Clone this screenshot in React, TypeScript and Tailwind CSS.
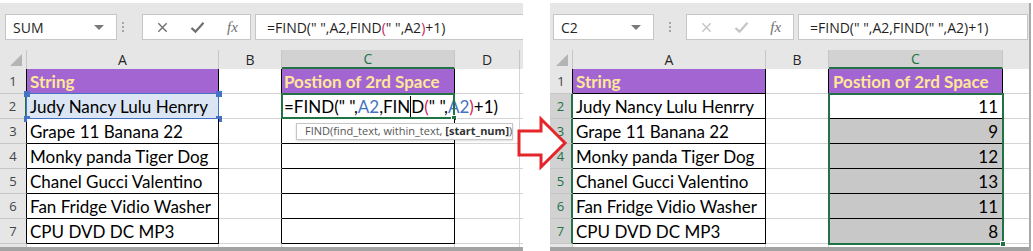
import React from "react";

const STRINGS = [
  "Judy Nancy Lulu Henrry",
  "Grape 11 Banana 22",
  "Monky panda Tiger Dog",
  "Chanel Gucci Valentino",
  "Fan Fridge Vidio Washer",
  "CPU DVD DC MP3",
];
const RESULTS = [11, 9, 12, 13, 11, 8];

const cellFont = "font-['Lato',sans-serif] text-[17px]";
const uiFont = "font-['Open_Sans',sans-serif]";

function XIcon({ className }: { className?: string }) {
  return (
    <svg viewBox="0 0 14 14" className={className}>
      <path d="M2.5 2.5 L11.5 11.5 M11.5 2.5 L2.5 11.5" stroke="currentColor" strokeWidth="1.5" fill="none" />
    </svg>
  );
}

function CheckIcon({ className }: { className?: string }) {
  return (
    <svg viewBox="0 0 16 14" className={className}>
      <path d="M1.5 7.5 L5.8 11.5 L14.5 2" stroke="currentColor" strokeWidth="2.4" fill="none" />
    </svg>
  );
}

function Toolbar({
  name,
  editing,
  nameCls,
  dotsCls,
  btnCls,
  barCls,
  children,
}: {
  name: string;
  editing: boolean;
  nameCls: string;
  dotsCls: string;
  btnCls: string;
  barCls: string;
  children: React.ReactNode;
}) {
  const icon = editing ? "text-[#6f6f6f]" : "text-[#c4c4c4]";
  return (
    <div className={`flex h-[47px] items-start bg-[#e6e6e6] pt-[11px] ${uiFont}`}>
      <div className={`relative flex h-[26px] items-center border border-[#c6c6c6] bg-white pl-[7px] ${nameCls}`}>
        <span className="text-[14px] text-[#262626]">{name}</span>
        <span className="absolute right-[12px] top-[10px] h-0 w-0 border-x-[5px] border-t-[5px] border-x-transparent border-t-[#7a7a7a]" />
      </div>
      <div className={`flex h-[26px] flex-col items-center justify-center gap-[2px] ${dotsCls}`}>
        <span className="h-[2px] w-[2px] bg-[#a6a6a6]" />
        <span className="h-[2px] w-[2px] bg-[#a6a6a6]" />
        <span className="h-[2px] w-[2px] bg-[#a6a6a6]" />
      </div>
      <div className={`flex h-[26px] items-center border border-[#c6c6c6] bg-white pl-[2px] ${btnCls}`}>
        <span className="flex w-[36px] justify-center">
          <XIcon className={`h-[13px] w-[13px] ${icon}`} />
        </span>
        <span className="flex w-[36px] justify-center">
          <CheckIcon className={`h-[13px] w-[15px] ${icon}`} />
        </span>
        <span className="flex w-[36px] justify-center font-['Liberation_Serif',serif] text-[15px] italic text-[#6f6f6f]">
          fx
        </span>
      </div>
      <div className={`flex h-[26px] flex-1 items-center whitespace-nowrap border border-[#c6c6c6] bg-white pl-[11px] text-[14px] text-[#1f1f1f] ${barCls}`}>
        {children}
      </div>
    </div>
  );
}

function Corner({ w }: { w: string }) {
  return (
    <div className={`relative h-full border-r border-[#c6c6c6] ${w}`}>
      <span className="absolute bottom-[3px] right-[4px] h-0 w-0 border-b-[12px] border-l-[12px] border-b-[#b4b4b4] border-l-transparent" />
    </div>
  );
}

function ColHead({ w, label, active }: { w: string; label: string; active?: boolean }) {
  return (
    <div
      className={`flex h-full items-center justify-center border-r border-[#c6c6c6] text-[14px] ${w} ${
        active ? "border-b-2 border-b-[#217346] bg-[#d2d2d2] text-[#217346]" : "text-[#262626]"
      }`}
    >
      {label}
    </div>
  );
}

function RowHead({ w, n, active, sel }: { w: string; n: number; active?: boolean; sel?: boolean }) {
  return (
    <div
      className={`flex h-full items-center justify-center border-b border-[#c6c6c6] pt-[2px] text-[13px] ${uiFont} ${w} ${
        active ? "border-r-2 border-r-[#217346]" : "border-r border-r-black"
      } ${sel ? "bg-[#d2d2d2] text-[#217346]" : "bg-[#e6e6e6] text-[#444]"}`}
    >
      {n}
    </div>
  );
}

const red = "text-[#d0205a]";
const blue = "text-[#4472c4]";

function LeftPane() {
  return (
    <div className="relative flex w-[523px] flex-col">
      <Toolbar
        name="SUM"
        editing
        nameCls="ml-[5px] w-[112px]"
        dotsCls="ml-[4px] w-[4px] mr-[17px]"
        btnCls="w-[109px]"
        barCls="ml-[4px] border-r-0"
      >
        =FIND(" ",A2,FIND<span className={red}>(</span>" ",A2<span className={red}>)</span>+1)
      </Toolbar>

      <div className={`flex h-[19px] bg-[#e6e6e6] ${uiFont}`}>
        <Corner w="w-[27px]" />
        <ColHead w="w-[192px]" label="A" />
        <ColHead w="w-[63px]" label="B" />
        <ColHead w="w-[173px]" label="C" active />
        <ColHead w="w-[65px]" label="D" />
        <div className="flex-1" />
      </div>

      <div className={`flex flex-col ${cellFont}`}>
        {[1, 2, 3, 4, 5, 6, 7].map((r) => (
          <div key={r} className="flex h-[25px]">
            <RowHead w="w-[27px]" n={r} active={r === 2} />
            <div
              className={`relative flex w-[192px] items-center whitespace-nowrap border-b border-r border-black px-[3px] pt-[1px] ${
                r === 1 ? "bg-[#a365d1] font-bold text-[#ffe79a]" : r === 2 ? "bg-[#dbe5f3]" : "bg-white text-black"
              }`}
            >
              {r === 1 ? "String" : STRINGS[r - 2]}
              {r === 2 && (
                <span className="pointer-events-none absolute -inset-[1px] border-[1.5px] border-[#4472c4]">
                  <span className="absolute -left-[3.5px] -top-[3.5px] h-[6px] w-[6px] bg-[#4472c4]" />
                  <span className="absolute -right-[3.5px] -top-[3.5px] h-[6px] w-[6px] bg-[#4472c4]" />
                  <span className="absolute -bottom-[3.5px] -left-[3.5px] h-[6px] w-[6px] bg-[#4472c4]" />
                  <span className="absolute -bottom-[3.5px] -right-[3.5px] h-[6px] w-[6px] bg-[#4472c4]" />
                </span>
              )}
            </div>
            <div className="w-[63px] border-b border-r border-b-[#d4d4d4] border-r-black bg-white" />
            <div
              className={`relative z-10 flex w-[173px] items-center whitespace-nowrap border-b border-r border-black px-[2px] pt-[1px] ${
                r === 1 ? "bg-[#a365d1] font-bold text-[#ffe79a]" : "bg-white text-black"
              }`}
            >
              {r === 1 && "Postion of 2rd Space"}
              {r === 2 && (
                <>
                  <span>
                    =FIND(" ",<span className={blue}>A2</span>,FIN
                  </span>
                  <span className="inline-block h-[21px] w-[1px] shrink-0 bg-black" />
                  <span>
                    D<span className={red}>(</span>" ",<span className={blue}>A2</span>
                    <span className={red}>)</span>+1)
                  </span>
                  <span className="pointer-events-none absolute -inset-[1px] border-2 border-[#217346]">
                    <span className="absolute -bottom-[4px] -right-[4px] h-[6px] w-[6px] border border-white bg-[#217346]" />
                  </span>
                </>
              )}
            </div>
            <div className={`w-[65px] border-b border-r border-[#d4d4d4] ${r === 2 ? "" : "bg-white"}`} />
            <div className="flex-1 border-b border-[#d4d4d4] bg-white" />
          </div>
        ))}
        <div className="flex h-[3px]">
          <div className="w-[27px] border-r border-[#c6c6c6] bg-[#e6e6e6]" />
          <div className="w-[192px] border-r border-[#d4d4d4]" />
          <div className="w-[63px] border-r border-[#d4d4d4]" />
          <div className="w-[173px] border-r border-[#d4d4d4]" />
          <div className="w-[65px] border-r border-[#d4d4d4]" />
        </div>
      </div>
      <div className="h-[4px] bg-[#a3a3a3]" />

      <div className={`absolute left-[296px] top-[120px] z-20 flex h-[17px] w-[217px] items-center whitespace-nowrap border border-[#c6c6c6] bg-white pl-[8px] text-[11px] text-[#555] shadow-[0_1px_2px_rgba(0,0,0,0.15)] ${uiFont}`}>
        FIND(find_text, within_text,&nbsp;<b className="font-bold text-[#333]">[start_num]</b>)
      </div>
    </div>
  );
}

function RightPane() {
  return (
    <div className="relative ml-[27px] flex w-[481px] flex-col border-r-2 border-[#a8a8a8]">
      <Toolbar
        name="C2"
        editing={false}
        nameCls="ml-[3px] w-[101px]"
        dotsCls="ml-[14px] w-[4px] mr-[14px]"
        btnCls="w-[108px]"
        barCls="ml-[4px] mr-[1px]"
      >
        =FIND(" ",A2,FIND(" ",A2)+1)
      </Toolbar>

      <div className={`flex h-[19px] bg-[#e6e6e6] ${uiFont}`}>
        <Corner w="w-[23px]" />
        <ColHead w="w-[193px]" label="A" />
        <ColHead w="w-[63px]" label="B" />
        <ColHead w="w-[174px]" label="C" active />
        <div className="flex-1" />
      </div>

      <div className={`relative flex flex-col ${cellFont}`}>
        {[1, 2, 3, 4, 5, 6, 7].map((r) => (
          <div key={r} className="flex h-[25px]">
            <RowHead w="w-[23px]" n={r} active={r > 1} sel={r > 1} />
            <div
              className={`flex w-[193px] items-center whitespace-nowrap border-b border-r border-black px-[3px] pt-[1px] ${
                r === 1 ? "bg-[#a365d1] font-bold text-[#ffe79a]" : "bg-white text-black"
              }`}
            >
              {r === 1 ? "String" : STRINGS[r - 2]}
            </div>
            <div className="w-[63px] border-b border-r border-b-[#d4d4d4] border-r-black bg-white" />
            <div
              className={`flex w-[174px] items-center whitespace-nowrap border-b border-r border-black px-[4px] pt-[1px] ${
                r === 1
                  ? "bg-[#a365d1] font-bold text-[#ffe79a]"
                  : r === 2
                  ? "justify-end bg-white text-black"
                  : "justify-end bg-[#c8c8c8] text-black"
              }`}
            >
              {r === 1 ? "Postion of 2rd Space" : RESULTS[r - 2]}
            </div>
            <div className="flex-1 border-b border-[#d4d4d4] bg-white" />
          </div>
        ))}
        <div className="flex h-[3px]">
          <div className="w-[23px] border-r border-[#c6c6c6] bg-[#e6e6e6]" />
          <div className="w-[193px] border-r border-[#d4d4d4]" />
          <div className="w-[63px] border-r border-[#d4d4d4]" />
          <div className="w-[174px] border-r border-[#d4d4d4]" />
        </div>

        <span className="pointer-events-none absolute left-[278px] top-[24px] h-[152px] w-[176px] border-2 border-[#217346]">
          <span className="absolute -bottom-[4px] -right-[4px] h-[6px] w-[6px] border border-white bg-[#217346]" />
        </span>
      </div>
      <div className="h-[4px] bg-[#a3a3a3]" />
    </div>
  );
}

function Arrow() {
  return (
    <svg className="pointer-events-none absolute left-0 top-0 z-30" width="1033" height="251" viewBox="0 0 1033 251">
      <polygon
        points="519,131 541,131 541,119 565,143 541,167 541,155 519,155"
        fill="white"
        stroke="#e4262b"
        strokeWidth="3"
        strokeLinejoin="miter"
      />
    </svg>
  );
}

export default function App() {
  return (
    <div className="relative flex h-[251px] w-[1033px] overflow-hidden bg-white pt-[3px]">
      <LeftPane />
      <RightPane />
      <Arrow />
    </div>
  );
}
